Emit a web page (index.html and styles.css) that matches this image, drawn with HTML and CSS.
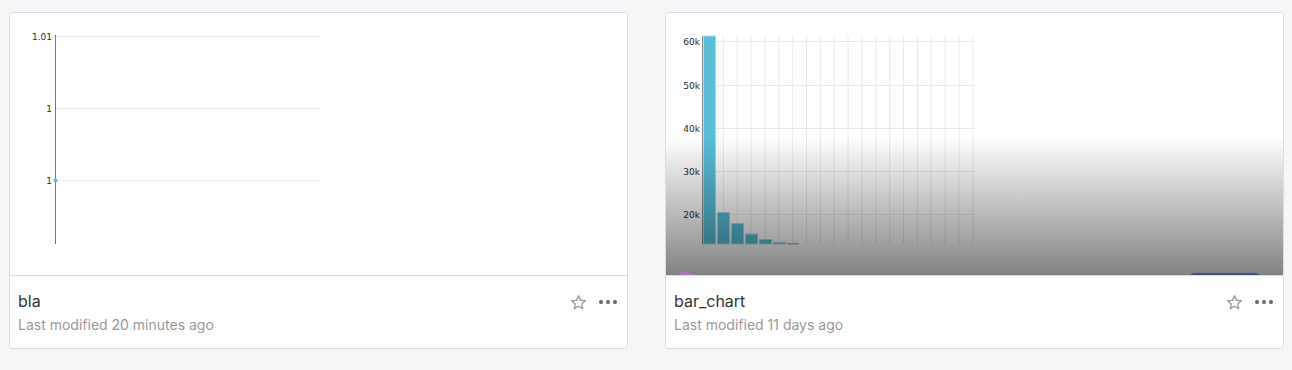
FILE: index.html
```html
<!DOCTYPE html>
<html>
<head>
<meta charset="utf-8">
<link rel="stylesheet" href="styles.css">
</head>
<body>
<div class="grid">
  <div class="card">
    <div class="preview">
      <svg class="chart" width="330" height="262" viewBox="0 0 330 262">
        <line x1="45" y1="23.5" x2="309" y2="23.5" stroke="#e4e4e4"/>
        <line x1="45" y1="95.5" x2="309" y2="95.5" stroke="#e4e4e4"/>
        <line x1="45" y1="167.5" x2="309" y2="167.5" stroke="#efefef"/>
        <line x1="45.5" y1="22" x2="45.5" y2="231" stroke="#777"/>
        <text x="42" y="26.5" text-anchor="end" class="tick">1.01</text>
        <text x="42" y="98.5" text-anchor="end" class="tick">1</text>
        <text x="42" y="170.5" text-anchor="end" class="tick">1</text>
        <circle cx="45.5" cy="167.5" r="2" fill="#5bc0de"/>
      </svg>
    </div>
    <div class="footer">
      <div class="meta">
        <div class="title">bla</div>
        <div class="sub">Last modified 20 minutes ago</div>
      </div>
      <div class="actions">
        <svg class="star" width="17" height="17" viewBox="0 0 24 24"><path d="M12 2.6l2.8 6.2 6.8.7-5.1 4.5 1.5 6.7L12 17.3l-6 3.4 1.5-6.7-5.1-4.5 6.8-.7z" fill="none" stroke="#9a9a9a" stroke-width="1.9" stroke-linejoin="round"/></svg>
        <span class="dots"><i></i><i></i><i></i></span>
      </div>
    </div>
  </div>
  <div class="card">
    <div class="preview">
      <svg class="chart" width="330" height="262" viewBox="0 0 330 262">
        <g stroke="#e9e9e9">
          <line x1="36" y1="28.5" x2="309" y2="28.5"/>
          <line x1="36" y1="72.5" x2="309" y2="72.5"/>
          <line x1="36" y1="115.5" x2="309" y2="115.5"/>
          <line x1="36" y1="158.5" x2="309" y2="158.5"/>
          <line x1="36" y1="201.5" x2="309" y2="201.5"/>
          <line x1="57.4" y1="23" x2="57.4" y2="231"/>
          <line x1="71.2" y1="23" x2="71.2" y2="231"/>
          <line x1="85.1" y1="23" x2="85.1" y2="231"/>
          <line x1="99" y1="23" x2="99" y2="231"/>
          <line x1="112.8" y1="23" x2="112.8" y2="231"/>
          <line x1="126.7" y1="23" x2="126.7" y2="231"/>
          <line x1="140.5" y1="23" x2="140.5" y2="231"/>
          <line x1="154.4" y1="23" x2="154.4" y2="231"/>
          <line x1="168.2" y1="23" x2="168.2" y2="231"/>
          <line x1="182.1" y1="23" x2="182.1" y2="231"/>
          <line x1="196" y1="23" x2="196" y2="231"/>
          <line x1="209.8" y1="23" x2="209.8" y2="231"/>
          <line x1="223.7" y1="23" x2="223.7" y2="231"/>
          <line x1="237.5" y1="23" x2="237.5" y2="231"/>
          <line x1="251.4" y1="23" x2="251.4" y2="231"/>
          <line x1="265.2" y1="23" x2="265.2" y2="231"/>
          <line x1="279.1" y1="23" x2="279.1" y2="231"/>
          <line x1="293" y1="23" x2="293" y2="231"/>
          <line x1="306.8" y1="23" x2="306.8" y2="231"/>
        </g>
        <g fill="#56bfd9" stroke="#a9dde9" stroke-width="1">
          <rect x="37.5" y="23" width="12" height="208"/>
          <rect x="51.5" y="199.5" width="12" height="31.5"/>
          <rect x="65.5" y="210.5" width="12" height="20.5"/>
          <rect x="79.5" y="221" width="12" height="10"/>
          <rect x="93.5" y="226.5" width="12" height="4.5"/>
          <rect x="107.5" y="229.5" width="12" height="1.5"/>
        </g>
        <rect x="121" y="230" width="12" height="1.5" fill="#9fb9c2"/>
        <line x1="36.5" y1="23" x2="36.5" y2="231" stroke="#8a8a8a"/>
        <text x="34" y="32" text-anchor="end" class="tick">60k</text>
        <text x="34" y="75.5" text-anchor="end" class="tick">50k</text>
        <text x="34" y="118.5" text-anchor="end" class="tick">40k</text>
        <text x="34" y="162" text-anchor="end" class="tick">30k</text>
        <text x="34" y="205" text-anchor="end" class="tick">20k</text>
      </svg>
      <div class="shade"></div>
      <span class="blob"></span>
      <span class="pill"></span>
    </div>
    <div class="footer">
      <div class="meta">
        <div class="title">bar_chart</div>
        <div class="sub">Last modified 11 days ago</div>
      </div>
      <div class="actions">
        <svg class="star" width="17" height="17" viewBox="0 0 24 24"><path d="M12 2.6l2.8 6.2 6.8.7-5.1 4.5 1.5 6.7L12 17.3l-6 3.4 1.5-6.7-5.1-4.5 6.8-.7z" fill="none" stroke="#9a9a9a" stroke-width="1.9" stroke-linejoin="round"/></svg>
        <span class="dots"><i></i><i></i><i></i></span>
      </div>
    </div>
  </div>
</div>
</body>
</html>
```
FILE: styles.css
```css
html, body {
  margin: 0;
  padding: 0;
}
body {
  background: #f6f6f8;
  font-family: Inter, "Noto Sans", sans-serif;
  width: 1292px;
  height: 370px;
  overflow: hidden;
}
.grid {
  display: grid;
  grid-template-columns: 619px 619px;
  column-gap: 37px;
  padding: 12px 0 0 9px;
}
.card {
  background: #fff;
  border: 1px solid #dcdce4;
  border-radius: 4px;
  overflow: hidden;
  display: flex;
  flex-direction: column;
}
.preview {
  position: relative;
  height: 262px;
  overflow: hidden;
  background: #fff;
}
.chart {
  display: block;
}
.tick {
  font-family: "DejaVu Sans", sans-serif;
  font-size: 9px;
  fill: #2a2a2a;
}
.shade {
  position: absolute;
  inset: 0;
  background: linear-gradient(to bottom, rgba(0,0,0,0) 47%, rgba(0,0,0,0.49) 100%);
}
.blob {
  position: absolute;
  left: 9px;
  top: 259px;
  width: 20px;
  height: 20px;
  border-radius: 50%;
  background: #b871c9;
}
.pill {
  position: absolute;
  left: 522px;
  top: 260px;
  width: 74px;
  height: 14px;
  border-radius: 7px;
  background: #3e4c95;
}
.footer {
  border-top: 1px solid #dcdce4;
  display: flex;
  justify-content: space-between;
  align-items: flex-start;
  padding: 15px 10px 13px 8px;
  height: 44px;
}
.title {
  font-size: 16px;
  line-height: 20px;
  color: #333;
}
.sub {
  margin-top: 4px;
  font-size: 14px;
  line-height: 20px;
  color: #999;
}
.actions {
  display: flex;
  align-items: center;
  gap: 12px;
  height: 22px;
}
.star {
  display: block;
}
.dots {
  display: flex;
  gap: 3px;
}
.dots i {
  display: block;
  width: 4px;
  height: 4px;
  border-radius: 50%;
  background: #666;
}
```
